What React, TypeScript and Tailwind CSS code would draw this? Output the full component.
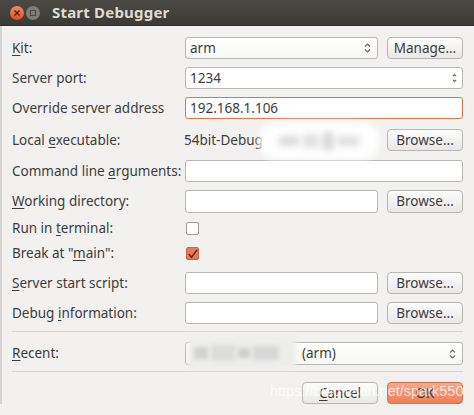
import React from "react";

const font = { fontFamily: '"Noto Sans", "Open Sans", sans-serif' };

function U({ children }: { children: React.ReactNode }) {
  return <span className="underline decoration-1 underline-offset-2">{children}</span>;
}

function Field({ className = "", children }: { className?: string; children?: React.ReactNode }) {
  return (
    <div
      className={
        "h-full bg-white border border-[#b6b6b3] rounded-[3px] flex items-center px-[4px] text-[13.5px] text-[#3c3c3c] relative " +
        className
      }
    >
      {children}
    </div>
  );
}

function Btn({ children, ok = false }: { children: React.ReactNode; ok?: boolean }) {
  return (
    <div
      className={
        "w-[76px] h-full rounded-[4px] border flex items-center justify-center text-[13.5px] text-[#3c3c3c] " +
        (ok
          ? "border-[#d8704c] bg-gradient-to-b from-[#f6a98c] to-[#ef7f58]"
          : "border-[#b6b6b3] bg-gradient-to-b from-[#fcfcfc] to-[#e9e8e6]")
      }
    >
      {children}
    </div>
  );
}

function Arrows({ small = false }: { small?: boolean }) {
  return (
    <svg
      width="7"
      height="12"
      viewBox="0 0 7 12"
      className={"absolute top-1/2 -translate-y-1/2 " + (small ? "right-[4px]" : "right-[6px]")}
    >
      <path d={small ? "M2 4 L3.5 2.5 L5 4" : "M1 4.5 L3.5 2 L6 4.5"} fill="none" stroke="#6b6b6b" strokeWidth="1.2" />
      <path d={small ? "M2 8 L3.5 9.5 L5 8" : "M1 7.5 L3.5 10 L6 7.5"} fill="none" stroke="#6b6b6b" strokeWidth="1.2" />
    </svg>
  );
}

function Row({
  label,
  h,
  mt,
  children,
}: {
  label: React.ReactNode;
  h: string;
  mt: string;
  children: React.ReactNode;
}) {
  return (
    <div className={"flex items-center " + h + " " + mt}>
      <div className="w-[173px] shrink-0 text-[13.5px] text-[#3c3c3c] whitespace-nowrap">{label}</div>
      <div className="flex-1 flex h-full items-center gap-[9px]">{children}</div>
    </div>
  );
}

function Check({ on = false }: { on?: boolean }) {
  return (
    <div
      className={
        "w-[13px] h-[13px] rounded-[2px] border ml-[1px] flex items-center justify-center " +
        (on ? "bg-[#ea7a51] border-[#c9633f]" : "bg-white border-[#9c9c99]")
      }
    >
      {on && (
        <svg width="12" height="12" viewBox="0 0 12 12">
          <path d="M2 6 L5 9.5 L11 1.5" fill="none" stroke="#4a2a1e" strokeWidth="1.6" />
        </svg>
      )}
    </div>
  );
}

export default function App() {
  return (
    <div className="w-[474px] h-[415px] overflow-hidden bg-[#f2f1f0] relative" style={font}>
      {/* title bar */}
      <div className="h-[26px] bg-gradient-to-b from-[#4a4944] to-[#3b3a36] flex items-center pl-[10px] gap-[2px] border-b border-[#2e2d2a]">
        <div className="w-[14px] h-[14px] rounded-full bg-gradient-to-b from-[#f28a5e] to-[#df4b1c] flex items-center justify-center">
          <svg width="6" height="6" viewBox="0 0 6 6">
            <path d="M0.5 0.5 L5.5 5.5 M5.5 0.5 L0.5 5.5" stroke="#4a1d0c" strokeWidth="1.3" />
          </svg>
        </div>
        <div className="w-[14px] h-[14px] rounded-full bg-[#7d7c78] flex items-center justify-center">
          <div className="w-[6px] h-[6px] border border-[#4a4945]" />
        </div>
        <div className="ml-[10px] text-[15px] font-bold text-[#dfdbd2] tracking-[0.2px]">Start Debugger</div>
      </div>

      <div className="flex flex-col pl-[10px] pr-[11px] border-l-[2px] border-[#d5d4d2]">
        <Row label={<><U>K</U>it:</>} h="h-[22px]" mt="mt-[11px]">
          <Field className="flex-1 bg-gradient-to-b from-white to-[#f7f7f6]">
            arm
            <Arrows />
          </Field>
          <Btn>Manage...</Btn>
        </Row>
        <Row label="Server port:" h="h-[22px]" mt="mt-[8px]">
          <Field className="flex-1">
            1234
            <Arrows small />
          </Field>
        </Row>
        <Row label="Override server address" h="h-[22px]" mt="mt-[8px]">
          <Field className="flex-1 border-[#e8734a]">192.168.1.106</Field>
        </Row>
        <Row label={<>Local <U>e</U>xecutable:</>} h="h-[22px]" mt="mt-[10px]">
          <div className="flex-1 h-full flex items-center text-[13.5px] text-[#3c3c3c] overflow-hidden whitespace-nowrap -ml-[1px]">
            54bit-Debug
          </div>
          <Btn>Browse...</Btn>
        </Row>
        <Row label={<>Command line <U>a</U>rguments:</>} h="h-[22px]" mt="mt-[9px]">
          <Field className="flex-1" />
        </Row>
        <Row label={<><U>W</U>orking directory:</>} h="h-[23px]" mt="mt-[8px]">
          <Field className="flex-1" />
          <Btn>Browse...</Btn>
        </Row>
        <Row label={<>Run in <U>t</U>erminal:</>} h="h-[13px]" mt="mt-[9px]">
          <Check />
        </Row>
        <Row label={<>Break at "<U>m</U>ain":</>} h="h-[13px]" mt="mt-[12px]">
          <Check on />
        </Row>
        <Row label={<><U>S</U>erver start script:</>} h="h-[22px]" mt="mt-[12px]">
          <Field className="flex-1" />
          <Btn>Browse...</Btn>
        </Row>
        <Row label={<>Debug <U>i</U>nformation:</>} h="h-[22px]" mt="mt-[8px]">
          <Field className="flex-1" />
          <Btn>Browse...</Btn>
        </Row>
        <div className="h-px bg-[#d8d7d4] mt-[7px]" />
        <Row label={<><U>R</U>ecent:</>} h="h-[23px]" mt="mt-[10px]">
          <Field className="flex-1 bg-gradient-to-b from-white to-[#f7f7f6]">
            <span className="ml-[112px]">(arm)</span>
            <Arrows />
          </Field>
        </Row>
        <div className="h-px bg-[#d8d7d4] mt-[6px]" />
        <div className="flex justify-end gap-[9px] h-[22px] mt-[10px]">
          <Btn>
            <U>C</U>ancel
          </Btn>
          <Btn ok>OK</Btn>
        </div>
      </div>

      {/* privacy blur over the executable path */}
      <div className="absolute left-[258px] top-[122px] w-[122px] h-[38px] rounded-[18px] bg-white/90 blur-[3px] flex items-center justify-center gap-[4px]">
        <div className="w-[20px] h-[10px] bg-[#dcdcdc]" />
        <div className="w-[16px] h-[14px] bg-[#e2e2e2]" />
        <div className="w-[10px] h-[18px] bg-[#d6d6d6]" />
        <div className="w-[22px] h-[10px] bg-[#e0e0e0]" />
      </div>
      {/* privacy blur over the recent entry */}
      <div className="absolute left-[188px] top-[337px] w-[108px] h-[32px] bg-[#ededec] blur-[2px] flex items-center gap-[3px] px-[6px]">
        <div className="w-[14px] h-[12px] bg-[#d2d2d2]" />
        <div className="w-[24px] h-[16px] bg-[#dcdcdc]" />
        <div className="w-[12px] h-[10px] bg-[#cfcfcf]" />
        <div className="w-[26px] h-[14px] bg-[#d8d8d8]" />
      </div>

      {/* watermark */}
      <div
        className="absolute left-[270px] top-[384px] text-[14.5px] leading-none text-white/75 whitespace-nowrap pointer-events-none"
        style={{ fontFamily: '"Liberation Sans", Arial, sans-serif' }}
      >
        https://blog.csdn.net/spark550
      </div>
    </div>
  );
}
